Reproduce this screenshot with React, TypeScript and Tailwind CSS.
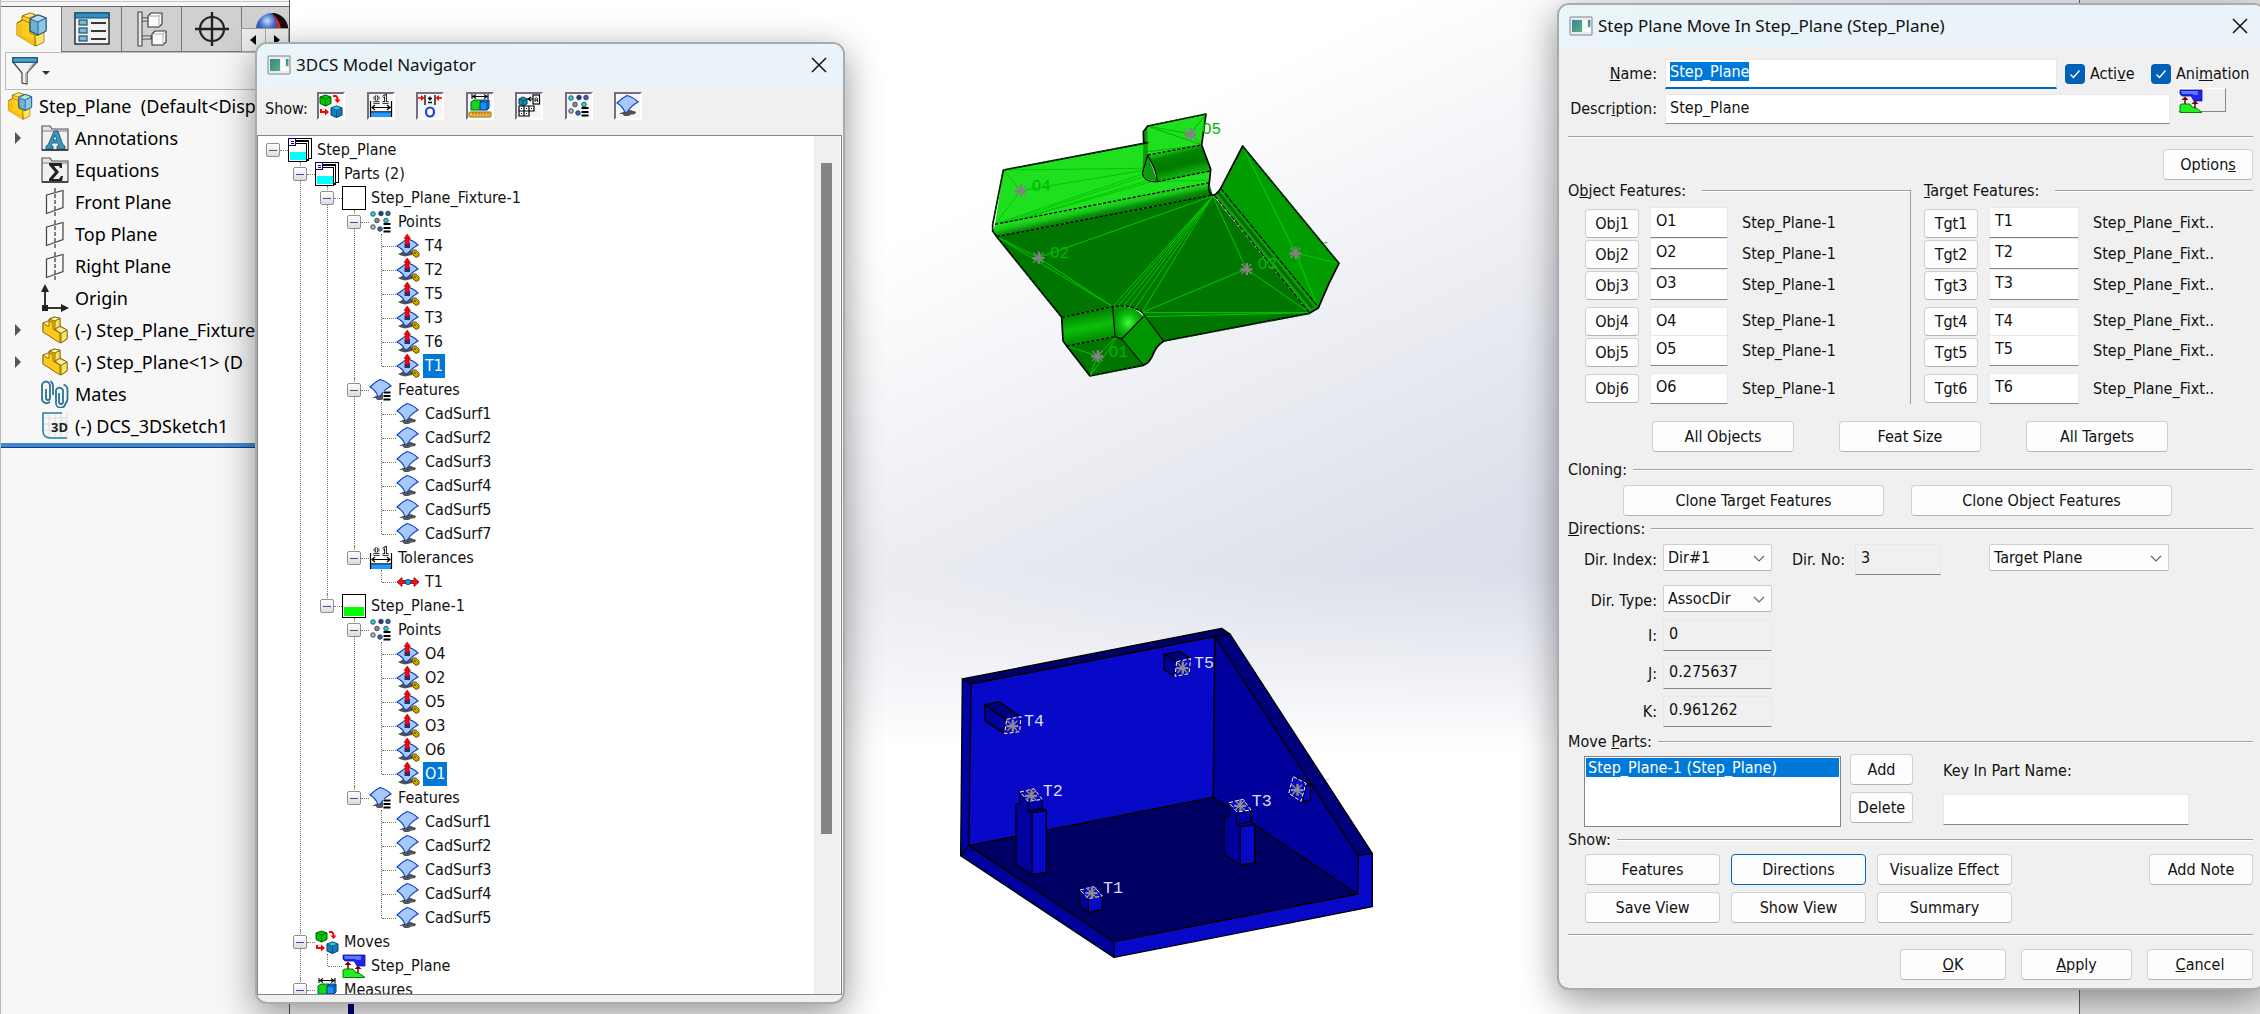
import { ReactNode, useEffect, useRef } from "react";

type IconProps = {
  className?: string;
};

type TreeNode = {
  label: string;
  icon: ReactNode;
  selected?: boolean;
  open?: boolean;
  children?: TreeNode[];
};

/* ---------- feature manager icons ---------- */

const PartIcon = ({ className }: IconProps) => (
  <svg viewBox="0 0 26 28" className={className} stroke="#7a5c0c" strokeWidth=".8" strokeLinejoin="round">
    <path d="M1 7v9l18 11 6-4v-9l-7-4V2l-6-1-5 2v3z" fill="#f9c815" />
    <path d="M1 7l6-2 4 1v7l7 4v10L1 16z" fill="#fbc91c" />
    <path d="M7 3l6-2 5 1.500-5 2.500z" fill="#fff0a0" />
    <path d="M1 7l6-2.500V10l-1 .5z" fill="#ffe97a" />
    <path d="M13 5l5-2.500v8L13 13z" fill="#ffe24d" />
    <path d="M13 13l5-2.500 7 3.500-6 3.500z" fill="#fff0a0" />
    <path d="M19 17.500l6-3.500v9l-6 4z" fill="#ffe45e" />
  </svg>
);

const AssemblyIcon = ({ className }: IconProps) => (
  <svg viewBox="0 0 31 35" className={className}>
    <path d="M1 11 6 8V4l8-3 6 2v18l7-2v11l-8 4L1 23z" fill="#ffcb1c" stroke="#8a6a10" />
    <path d="M1 11l5 2v10l12 6v5L1 23z" fill="#f5bf12" />
    <path d="M1 11l6-3 7 3v10l5 2v11" fill="none" stroke="#8a6a10" strokeWidth=".8" />
    <path d="M6 4l8-3 6 2-7 3z" fill="#ffe97a" stroke="#8a6a10" strokeWidth=".7" />
    <path d="M19 24l9-4v10l-8 4z" fill="#ffe45e" stroke="#8a6a10" strokeWidth=".7" />
    <path d="M14 7l8-4 8 3v13l-8 4-8-4z" fill="#6fb1d8" stroke="#15506f" strokeWidth="1.2" />
    <path d="M14 7l8-4 8 3-8 4z" fill="#b9dcf0" stroke="#15506f" strokeWidth=".8" />
    <path d="M22 10l8-4v13l-8 4z" fill="#8fc6e4" stroke="#15506f" strokeWidth=".8" />
  </svg>
);

const PropertyIcon = () => (
  <svg viewBox="0 0 36 34" className="h-[34px] w-9">
    <rect x="1" y="1" width="34" height="31" fill="#f4f4f4" stroke="#222" strokeWidth="1.4" />
    <rect x="1" y="1" width="34" height="5" fill="#2f8fbf" stroke="#14506e" />
    {[8, 16, 24].map((y) => (
      <g key={y}>
        <rect x="5" y={y} width="8" height="5" fill="#7fb9d8" stroke="#16536f" strokeWidth="1.2" />
        <path d={`M17 ${y + 3}h15`} stroke="#222" strokeWidth="1.8" />
      </g>
    ))}
  </svg>
);

const ConfigIcon = () => (
  <svg viewBox="0 0 30 36" className="h-9 w-[30px]">
    <path d="M3 1v34M5 9h8M5 27h10" stroke="#555" strokeWidth="1.2" />
    <path d="M1 1h4v34H1zM5 7h7v3H5zM5 25h9v3H5z" fill="#e8e8e8" stroke="#444" strokeWidth="1.1" />
    <path d="M11 5l3-3h11v11l-3 3H11z" fill="#fafafa" stroke="#333" strokeWidth="1.1" />
    <path d="M11 5h11v11M22 5l3-3" fill="none" stroke="#999" strokeWidth=".8" />
    <path d="M15 23l3-3h11v11l-3 3H15z" fill="#fafafa" stroke="#333" strokeWidth="1.1" />
    <path d="M15 23h11v11M26 23l3-3" fill="none" stroke="#999" strokeWidth=".8" />
  </svg>
);

const TargetIcon = () => (
  <svg viewBox="0 0 36 36" className="size-9">
    <circle cx="18" cy="18" r="12" fill="none" stroke="#222" strokeWidth="2.2" />
    <path d="M18 1v34M1 18h34" stroke="#222" strokeWidth="2.4" />
  </svg>
);

const SphereIcon = () => (
  <svg viewBox="0 0 34 34" className="size-[34px]">
    <defs>
      <radialGradient id="ball" cx=".35" cy=".25" r=".7">
        <stop offset="0" stopColor="#cfe0ff" />
        <stop offset=".35" stopColor="#3c69c8" />
        <stop offset="1" stopColor="#152a6b" />
      </radialGradient>
    </defs>
    <circle cx="17" cy="17" r="16" fill="url(#ball)" />
    <path d="M17 1a16 16 0 0 1 16 16H22Q22 8 17 1" fill="#1a0a0a" />
    <path d="M17 1q4 4 5 16l4 0Q25 8 17 1" fill="#d62b2b" />
  </svg>
);

const FilterIcon = () => (
  <svg viewBox="0 0 26 28" className="h-7 w-[26px]">
    <path d="M1 5 10 16v10l5 1V16L25 5z" fill="#f1f1f1" stroke="#444" strokeWidth="1.2" />
    <rect x=".7" y=".7" width="24.6" height="4.6" fill="#4aa3cb" stroke="#14506e" strokeWidth="1.2" />
    <path d="M14 16v9M16 14l6-8" stroke="#aaa" strokeWidth="1.6" />
  </svg>
);

const Folder = ({ children }: { children: ReactNode }) => (
  <svg viewBox="0 0 28 26" className="h-[26px] w-7">
    <path d="M1 1h8l2 3h16v21H1z" fill="#e4e4e4" stroke="#555" strokeWidth="1.2" />
    <path d="M1 6h26" stroke="#888" strokeWidth="1" />
    <rect x="2" y="7" width="24" height="17" fill="#f1f1f1" />
    {children}
    <path d="M1 25h26" stroke="#222" strokeWidth="1.4" />
  </svg>
);

const AnnotationsIcon = () => (
  <Folder>
    <path
      d="M5 24v-3l2-1 6-14h4l5 14 2 1v3h-8v-3h2l-1-3h-6l-1 3h2v3zM12 15h4l-2-5z"
      fill="#3a95c0"
      fillRule="evenodd"
      stroke="#12506e"
      strokeWidth=".8"
    />
  </Folder>
);

const EquationsIcon = () => (
  <Folder>
    <path d="M8 6h13v5h-2l-1-2h-5l5 6-6 7h6l2-3h2l-1 5H8v-2l6-7-6-7z" fill="#222" />
  </Folder>
);

const PlaneIcon = () => (
  <svg viewBox="0 0 20 28" className="h-7 w-5">
    <path d="M1.500 7 18 2.500v17L1.500 25.500z" fill="none" stroke="#444" strokeWidth="1.200" />
    <path d="M10 0v28" stroke="#333" strokeWidth="1.200" strokeDasharray="4 2" />
  </svg>
);

const OriginIcon = () => (
  <svg viewBox="0 0 28 28" className="size-7">
    <path d="M4 8v16h16" fill="none" stroke="#333" strokeWidth="2" />
    <path d="M4 0 8 8H0zM28 24l-8 4v-8zM1 21h6v6H1z" fill="#222" />
  </svg>
);

const MatesIcon = () => (
  <svg viewBox="0 0 28 28" className="size-7" fill="none" stroke="#2a7394" strokeWidth="1.800">
    <path d="M5 9v9a2 2 0 0 0 4 0V6a4 4.500 0 0 0-8 0v13a4.500 4.500 0 0 0 8 2.500M12 15V6q0-3-2.500-5" />
    <path d="M18 13v9a2 2 0 0 0 4 0V10a4 4.500 0 0 0-7 0v12a4.800 5 0 0 0 9.500 1.500q2-2 2-5V10q0-4-4-5.500" />
  </svg>
);

const SketchIcon = () => (
  <svg viewBox="0 0 28 28" className="size-7">
    <path d="M2 6h24M2 12h24M2 18h24M8 1v26M14 1v26M20 1v26M26 1v26" stroke="#ddd" strokeWidth="1" />
    <path d="M21 1H2v18q0 7 8 7h16" fill="none" stroke="#2a7fa6" strokeWidth="1.600" />
    <text x="10" y="20" fontSize="13" fontWeight="700" fill="#222" fontFamily="Noto Sans, sans-serif">
      3D
    </text>
  </svg>
);

/* ---------- navigator icons, 24 unit grid ---------- */

const Pages = () => (
  <svg viewBox="0 0 24 24" className="size-6" shapeRendering="crispEdges">
    <path d="M8 .7h15.300v20H21M5 3h15.500v19H19" fill="none" stroke="#000" strokeWidth="1.400" />
    <rect x=".7" y="5.500" width="18" height="17.800" fill="#fff" stroke="#000" strokeWidth="1.400" />
    <rect x="2" y="14" width="15.500" height="8" fill="#00ffff" />
    <rect x=".7" y=".7" width="7" height="6.600" fill="#fff" stroke="#000080" strokeWidth="1.400" />
    <path d="M2.500 3h3M2.500 5h3" stroke="#000080" />
  </svg>
);

const Box = ({ fill }: { fill?: string }) => (
  <svg viewBox="0 0 24 24" className="size-6" shapeRendering="crispEdges">
    <rect x=".5" y=".5" width="23" height="23" fill="#fff" stroke="#000" />
    {fill && <rect x="2" y="13" width="20" height="9" fill={fill} />}
  </svg>
);

const PointsIcon = () => (
  <svg viewBox="0 0 24 24" className="size-6">
    <g stroke="#234" strokeWidth=".8">
      <circle cx="4" cy="4" r="2.300" fill="#1fd6dc" />
      <circle cx="12" cy="3.500" r="2.300" fill="#23407e" />
      <circle cx="19" cy="3.500" r="2.300" fill="#3a62b8" />
      <circle cx="8" cy="10.500" r="2.300" fill="#8a8a8a" />
      <circle cx="17" cy="10.500" r="2.300" fill="#1fd6dc" />
      <circle cx="4" cy="17" r="2.300" fill="#b4b4b4" />
      <circle cx="11" cy="19" r="2.300" fill="#3a62b8" />
    </g>
    <path d="M14.500 14h7M14.500 18h7M14.500 21.500h7" stroke="#000" strokeWidth="2.200" />
  </svg>
);

const surface = (
  <>
    <path d="M3 20q5-3 8-3 4-2 6 0 3 0 3 2-2 2-5 1.500-2 2-5 1.500-3 0-3-2z" fill="#555" />
    <path
      d="M1 9Q6 4 11 1.500q6 1.500 11 6.500-6 3-10 9-1 1.500-3 1.500-2-6-8-9.500z"
      fill="#a8c8fb"
      stroke="#0a3fc0"
      strokeWidth="1.100"
    />
  </>
);

const SurfaceIcon = () => (
  <svg viewBox="0 0 24 24" className="size-6">
    {surface}
  </svg>
);

const SurfaceListIcon = () => (
  <svg viewBox="0 0 24 24" className="size-6">
    {surface}
    <path d="M14 13h8v10h-8z" fill="#fff" />
    <path d="M14.500 14.500h7M14.500 18h7M14.500 21.500h7" stroke="#000" strokeWidth="2.200" />
  </svg>
);

const PointIcon = () => (
  <svg viewBox="0 0 24 24" className="size-6">
    <path d="M2 20q5-3 9-3 5-1 7 2l-2 2-7 1.500-4-1z" fill="#555" />
    <path
      d="M1 12q5-3 10-7 6 1 11 6-6 3-10 8l-3 1q-2-5-8-8z"
      fill="#a8c8fb"
      stroke="#0a3fc0"
      strokeWidth="1.100"
    />
    <rect x="8.500" y="9" width="5.500" height="5" fill="#16357f" />
    <path d="M11.200 0 14.500 4.500h-1.500V11h-3.500V4.500H8z" fill="#f00" stroke="#a00" strokeWidth=".600" />
    <path d="M16 16h4l3 3v3l-3 1.500-3-2.500z" fill="#c8a400" stroke="#6b5800" strokeWidth="1" />
    <circle cx="19" cy="19" r="1" fill="#6b5800" />
  </svg>
);

const ToleranceIcon = () => (
  <svg viewBox="0 0 24 24" className="size-6">
    <path d="M2 18h20v5H2z" fill="#1f9bff" />
    <path d="M1.500 7v16M22.500 7v16" stroke="#000" strokeWidth="1.200" />
    <path d="M1 17.800h22" stroke="#000" strokeWidth="1" />
    <path d="M3 13.500h18M6 11l-3 2.500 3 2.500M18 11l3 2.500-3 2.500" fill="none" stroke="#000" strokeWidth="1.200" />
    <path d="M4.500 4h6M7.500 1.500v5M4.500 8.500h6M14 3l2.500-1.500V8.500M13.500 8.500h6" fill="none" stroke="#000" strokeWidth="2.600" />
    <path d="M4.500 4h6M7.500 1.500v5M4.500 8.500h6M14 3l2.500-1.500V8.500M13.500 8.500h6" fill="none" stroke="#fff" strokeWidth=".900" />
  </svg>
);

const GaugeIcon = () => (
  <svg viewBox="0 0 24 24" className="size-6">
    <path d="M7 1v10M17 1v10M10 4.500h4M12 2.500v4M10 8.500h4" stroke="#000" strokeWidth="1.300" />
    <path d="M0 4h5M24 4h-5" stroke="#f00" strokeWidth="1.500" />
    <path d="M3 1l3.500 3L3 7zM21 1l-3.500 3L21 7z" fill="#f00" />
    <ellipse cx="12" cy="18" rx="4" ry="4.500" fill="#fff" stroke="#1f3fe0" strokeWidth="2.200" />
  </svg>
);

const ArrowPairIcon = () => (
  <svg viewBox="0 0 24 24" className="size-6">
    <path d="M1 12l5-4.500v3h12v-3l5 4.500-5 4.500v-3H6v3z" fill="#f00f0f" stroke="#8a0000" strokeWidth=".800" />
    <circle cx="12" cy="12" r="2.700" fill="#12a0f0" stroke="#123a80" strokeWidth=".800" />
  </svg>
);

const MovesIcon = () => (
  <svg viewBox="0 0 24 24" className="size-6">
    <path d="M1 3l5.500-2L12 3v6.500L6.500 12 1 9.500z" fill="#00c800" stroke="#006000" />
    <path d="M1 3l5.500 2L12 3M6.500 5v7" fill="none" stroke="#006000" strokeWidth=".800" />
    <path d="M12 14l5.500-2 5.500 2v7l-5.500 2.500L12 21z" fill="#0f7fc4" stroke="#053a68" />
    <path d="M12 14l5.500-2 5.500 2-5.500 2z" fill="#26cfd2" stroke="#053a68" strokeWidth=".600" />
    <path d="M17.500 16v7" stroke="#053a68" strokeWidth=".800" />
    <path d="M14 2h3q1.500 1 1.500 4M2 15v3h4" fill="none" stroke="#f00" strokeWidth="2" />
    <path d="M15.500 5.500h6l-3 3.500zM6 14.500l4 3.500-4 3.500z" fill="#f00" />
  </svg>
);

const StepPlaneIcon = () => (
  <svg viewBox="0 0 24 24" className="size-6">
    <path d="M1 1h22v11h-8l-3-5H3L1 5z" fill="#2222f0" stroke="#1010a0" strokeWidth=".800" />
    <path d="M2 2h17v4h-4l-2-1H3z" fill="#5a78ff" />
    <path d="M1 16l2-1h8l2 3 4 1 6 4.500H1z" fill="#22ee22" stroke="#087a08" />
    <path d="M6 15v-5M16 19v-5" stroke="#7a0000" strokeWidth="1.500" />
    <path d="M2.500 11 6 7.500 9.500 11zM12.500 15l3.500-3.500 3.500 3.500z" fill="#7a0000" />
  </svg>
);

const MeasureIcon = () => (
  <svg viewBox="0 0 24 24" className="size-6">
    <path d="M4 0v5M20 0v5M5 2.500h14M8 .5l-3 2 3 2M16 .5l3 2-3 2" fill="none" stroke="#000" strokeWidth="1.100" />
    <path d="M3 8l3-2h8v8l-2 2H3z" fill="#14d814" stroke="#063" />
    <path d="M12 8l3-2h6v8l-2 2h-7z" fill="#1590ff" stroke="#002a66" />
    <path d="M19 8v8M12 8h7l2-2" fill="none" stroke="#002a66" strokeWidth=".800" />
    <rect x="1" y="18" width="22" height="5" rx="1" fill="#f2b84c" stroke="#a66a00" />
    <path d="M5 18v3M8 18v3M11 18v3M14 18v3M17 18v3M20 18v3" stroke="#a66a00" strokeWidth=".900" />
  </svg>
);

const DatumIcon = () => (
  <svg viewBox="0 0 24 24" className="size-6">
    <path d="M2 5l4-2 4 2v5l-4 2-4-2z" fill="#1590b4" stroke="#053a4c" />
    <path d="M2 5l4 2 4-2M6 7v5" fill="none" stroke="#053a4c" strokeWidth=".800" />
    <path d="M10 5h6M14 3l-3 2 3 2" fill="none" stroke="#000" strokeWidth="1.200" />
    <rect x="16" y="1" width="6.500" height="9" fill="#fff" stroke="#000" strokeWidth="1.200" />
    <path d="M18 8V4.500l1.200-1 1.200 1V8M18 6h2.400" fill="none" stroke="#000" strokeWidth=".900" />
    <path d="M2 12h15v5H2zM2 17h10v5H2zM7 12v10M12 12v5" fill="#fff" stroke="#000" strokeWidth="1.200" />
    <path d="M4 14.500h1M9 14.500h1M14 14.500h1M4 19.500h1M9 19.500h1" stroke="#000" strokeWidth="1.200" />
  </svg>
);

const WindowIcon = () => (
  <svg viewBox="0 0 24 20" className="h-5 w-6 shrink-0">
    <defs>
      <linearGradient id="win" x1="0" x2="1" y1="0" y2="1">
        <stop offset="0" stopColor="#3d7f9c" />
        <stop offset="1" stopColor="#55b47a" />
      </linearGradient>
    </defs>
    <rect x="1" y="1" width="22" height="18" rx="1" fill="#e9edf0" stroke="#a4a8ae" strokeWidth="1.500" />
    <rect x="3" y="4" width="10" height="12" fill="url(#win)" />
    <rect x="14" y="4" width="3.500" height="7" fill="#fff" />
    <rect x="19" y="4" width="2.500" height="7" fill="url(#win)" />
    <rect x="14" y="12" width="7.500" height="4" fill="#fff" />
  </svg>
);

const CloseIcon = () => (
  <svg viewBox="0 0 16 16" className="size-4">
    <path d="M1 1l14 14M15 1L1 15" stroke="#111" strokeWidth="1.500" />
  </svg>
);

/* ---------- left panel ---------- */

const managerTabs = [
  { name: "FeatureManager", icon: <AssemblyIcon className="h-[35px] w-[31px]" /> },
  { name: "PropertyManager", icon: <PropertyIcon /> },
  { name: "ConfigurationManager", icon: <ConfigIcon /> },
  { name: "DimXpertManager", icon: <TargetIcon /> },
  { name: "DisplayManager", icon: <SphereIcon /> },
];

const part = <PartIcon className="h-7 w-[26px]" />;

const features = [
  { label: "Annotations", icon: <AnnotationsIcon />, arrow: true },
  { label: "Equations", icon: <EquationsIcon /> },
  { label: "Front Plane", icon: <PlaneIcon /> },
  { label: "Top Plane", icon: <PlaneIcon /> },
  { label: "Right Plane", icon: <PlaneIcon /> },
  { label: "Origin", icon: <OriginIcon /> },
  { label: "(-) Step_Plane_Fixture", icon: part, arrow: true },
  { label: "(-) Step_Plane<1> (D", icon: part, arrow: true },
  { label: "Mates", icon: <MatesIcon /> },
  { label: "(-) DCS_3DSketch1", icon: <SketchIcon /> },
];

const FeatureManager = () => (
  <aside className="w-[290px] shrink-0 overflow-hidden border-r border-l border-r-[#555] border-l-[#bbb] bg-[#f7f7f7] font-['Noto_Sans',sans-serif] text-lg text-black">
    <div className="mt-px h-[5px] border-t border-[#c4c4c4]" />
    <div className="relative flex h-[46px] border-t border-[#666]">
      {managerTabs.map((tab, index) => (
        <button
          key={tab.name}
          aria-label={tab.name}
          className={
            index === 0
              ? "flex w-[60px] shrink-0 items-center justify-center"
              : "flex w-[60px] shrink-0 items-center justify-center border-b border-l border-[#777] bg-[#d0d0d0]"
          }
        >
          {tab.icon}
        </button>
      ))}
      <div className="absolute right-0 bottom-0 flex h-[24px] w-12 border border-[#999] bg-[#ececec]">
        <button aria-label="Previous tab" className="flex flex-1 items-center justify-center border-r border-[#aaa]">
          <svg viewBox="0 0 6 10" className="h-2.5 w-1.5">
            <path d="M6 0v10L0 5z" />
          </svg>
        </button>
        <button aria-label="Next tab" className="flex flex-1 items-center justify-center">
          <svg viewBox="0 0 6 10" className="h-2.5 w-1.5">
            <path d="M0 0v10l6-5z" />
          </svg>
        </button>
      </div>
    </div>
    <button aria-label="Filter" className="ml-1 flex h-[38px] w-full items-center gap-1 border border-[#bbb] pl-1.5">
      <FilterIcon />
      <svg viewBox="0 0 8 4" className="mt-1 h-1 w-2">
        <path d="M0 0h8L4 4z" fill="#333" />
      </svg>
    </button>
    <ul className="border-b-4 border-[#3a8cc8] pb-px whitespace-pre">
      <li className="flex h-8 items-center gap-1.5 pl-1.5">
        <AssemblyIcon className="h-7 w-[26px]" />
        Step_Plane  (Default&lt;Disp
      </li>
      {features.map((item) => (
        <li key={item.label} className="flex h-8 items-center">
          <span className="flex w-[38px] pl-3.5">
            {item.arrow && (
              <svg viewBox="0 0 6 12" className="h-3 w-1.5">
                <path d="M0 0v12l6-6z" fill="#555" />
              </svg>
            )}
          </span>
          <span className="mr-1 flex w-8 justify-center">{item.icon}</span>
          {item.label}
        </li>
      ))}
    </ul>
    <div className="h-px bg-[#1c2f9c]" />
  </aside>
);

/* ---------- graphics area ---------- */

const Star = ({ x, y, color }: { x: number; y: number; color: string }) => (
  <path
    transform={`translate(${x} ${y})`}
    d="M-18 0h36M0-18v36M-15-15l30 30M15-15l-30 30M-18 3h36M3-18v36"
    stroke={color}
    strokeWidth="4"
  />
);

const starPoints = [
  [152, 302],
  [205, 503],
  [829, 537],
  [976, 489],
  [382, 798],
  [661, 132],
];

const StepPlanePart = () => (
  <svg viewBox="0 0 1200 930" className="h-[310px] w-[400px]" strokeLinejoin="round">
    <defs>
      <linearGradient id="fold" gradientUnits="userSpaceOnUse" x1="390" y1="342" x2="398" y2="380">
        <stop offset="0" stopColor="#1fdd1f" />
        <stop offset=".35" stopColor="#17c817" />
        <stop offset=".7" stopColor="#0a8c0a" />
        <stop offset="1" stopColor="#007a00" />
      </linearGradient>
      <linearGradient id="bend" gradientUnits="userSpaceOnUse" x1="610" y1="180" x2="630" y2="262">
        <stop offset="0" stopColor="#18c418" />
        <stop offset=".2" stopColor="#008400" />
        <stop offset=".6" stopColor="#007c00" />
        <stop offset="1" stopColor="#12b812" />
      </linearGradient>
      <linearGradient id="lip" gradientUnits="userSpaceOnUse" x1="345" y1="668" x2="360" y2="754">
        <stop offset="0" stopColor="#008000" />
        <stop offset=".5" stopColor="#0ac00a" />
        <stop offset="1" stopColor="#008a00" />
      </linearGradient>
      <radialGradient id="corner">
        <stop offset="0" stopColor="#3aff3a" />
        <stop offset=".5" stopColor="#0fc00f" />
        <stop offset="1" stopColor="#009000" />
      </radialGradient>
    </defs>
    <path d="M100 240 533 158l-14 80 10 30 32 7 158-32v35L75 403z" fill="#1fe01f" />
    <path d="M75 403 718 278l10 37L80 440l-10-18z" fill="url(#fold)" />
    <path d="M80 440 728 315l290 355-436 85-62-87-50-19-42 1-153 32z" fill="#007600" />
    <path d="M533 108 708 72l-13 93-162 30z" fill="#1fe01f" />
    <path d="M533 108 522 125l-5 120q6 30 45 28l-28-78z" fill="#0b9a0b" />
    <path d="M533 195l162-30q8 30 27 65v13l-160 32q-2-30-29-80z" fill="url(#bend)" />
    <path d="M818 168 1107 520l-30 60-32 74-25 16L752 295z" fill="#009c00" />
    <path d="M752 295 732 315l286 355 20-18z" fill="#0aa00a" />
    <path d="M742 304l286 350" stroke="#006a00" strokeWidth="9" />
    <path d="M275 682l153-32 7 90-145 28-10-15z" fill="url(#lip)" />
    <path d="M428 650q60-8 94 30l-67 67-20-7z" fill="url(#corner)" />
    <path d="M516 664l66 91q-22 13-32 38-10 27-30 33l-65-79 65-67z" fill="#009400" />
    <path d="M290 768l145-28 20 7 65 78-160 33z" fill="#007600" />

    <g fill="none" stroke="#00c800" strokeWidth="3">
      <path d="M100 240l52 62 375-62M100 240l427-5M152 302 75 403M80 400l445-150M90 400l438-142M100 400l440-130M110 398l440-124M560 275l160-5" />
      <path d="M533 108l128 24 47-60M533 108l162 57-34-33M533 185l162-20" stroke="#00b400" />
      <path d="M80 440l125 63L728 318M80 440l348 210-223-147" />
      <path d="M728 318 430 648M728 318 445 646M728 318 462 646M728 318 478 648M728 318 495 655M728 318 515 668" />
      <path d="M728 318l101 219 189 131M829 537 515 668l503 0M525 680l493-12" />
      <path d="M818 168l158 321 62 151M818 168l164 330 56 142M976 489l131 31" />
      <path d="M290 768l92 30 55-56M360 858l22-60M360 858l80-114" />
    </g>

    <g fill="none" stroke="#000" strokeWidth="3.500">
      <path d="M533 195l-16 55q6 28 45 25M533 195q28 50 29 80M428 650l7 90M435 740l20 7 65-67M455 747l65 78M516 666l66 89" />
      <path d="M752 295l288 350M732 315l286 353" strokeDasharray="16 4" />
    </g>
    <g fill="none" stroke="#000" strokeWidth="4" strokeDasharray="10 5">
      <path d="M75 403 718 278M80 440 728 315M533 195l162-30M562 275l158-32M275 682l153-32q60-8 92 20M290 768l145-28" />
    </g>
    <path
      d="M533 158 100 240 68 403v20l12 17 195 242 4 70 11 16 70 90 160-32q20-8 30-35 10-25 32-38l436-83 27-16 32-74 30-60L818 168l-66 127q-14 24-28 20-12-16-6-37l4-40-27-73 13-93-175 36-13 17 1 33z"
      fill="none"
      stroke="#000"
      strokeWidth="5"
    />
    <g fill="none" stroke="#00c800" strokeWidth="1.500" strokeDasharray="6 8">
      <path d="M533 158 100 240 68 403v20l12 17 195 242M1107 520 818 168M1018 670l-436 85M708 72 533 108M360 858l160-32" />
    </g>
    <path d="M1062 458h10" stroke="#00c800" strokeWidth="3" />

    {starPoints.map(([x, y]) => (
      <Star key={x} x={x} y={y} color="#848084" />
    ))}
    <g fill="#00b800" fontSize="48" className="font-['Liberation_Mono',monospace]">
      <text x="185" y="304">
        O4
      </text>
      <text x="240" y="505">
        O2
      </text>
      <text x="863" y="538">
        O3
      </text>
      <text x="416" y="800">
        O1
      </text>
      <text x="696" y="132">
        O5
      </text>
    </g>
  </svg>
);

const targetPoints = [
  { name: "T5", x: 727, y: 173 },
  { name: "T4", x: 217, y: 347 },
  { name: "T2", x: 273, y: 556 },
  { name: "T3", x: 900, y: 586 },
  { name: "T1", x: 454, y: 848 },
  { name: "", x: 1071, y: 539 },
];

const FixturePart = () => (
  <svg viewBox="0 0 1380 1110" className="h-[370px] w-[460px]" strokeLinejoin="round">
    <g stroke="#000" strokeWidth="4">
      <path d="M67 207 845 55l25 17-45 8L93 222z" fill="#000066" />
      <path d="M67 207l26 15-6 485-25 30z" fill="#0000a8" />
      <path d="M93 222 825 80l-5 482L87 707z" fill="#0808c8" />
      <path d="M87 707 820 562l433 290-731 143z" fill="#000064" />
      <path d="M825 80l430 657-2 115-433-290z" fill="#00009c" />
      <path d="M825 80l45-8 427 658-42 7z" fill="#00007c" />
      <path d="M62 737l25-30 435 288v47z" fill="#00009c" />
      <path d="M522 995l731-143 2-115 42-7v160L522 1042z" fill="#0808c8" />

      <path d="M673 133l46-9 33 22-5 45-42 8-32-20z" fill="#00007c" />
      <path d="M673 133l37 22-5 44-32-20z" fill="#00009c" />
      <path d="M134 284l44-8 65 44-4 45-45 6-60-40z" fill="#00007c" />
      <path d="M134 284l64 45-4 42-60-40z" fill="#00009c" />

      <path d="M228 583l12-3v-34l42-10 25 32v30l12 5v184l-43 7-48-30z" fill="#00009c" />
      <path d="M276 608l43-7v186l-43 7z" fill="#0808c8" />
      <path d="M265 572l42-6v30l-42 7zM265 603l42-7 12 5-43 7z" fill="#0000a8" />
      <path d="M853 621l14-3v-36l40-12 26 30v36l11 6v116l-42 7-49-32z" fill="#00009c" />
      <path d="M901 650l43-7v115l-43 7z" fill="#0808c8" />
      <path d="M890 608l43-6v33l-43 8zM890 643l43-8 11 8-43 7z" fill="#0000a8" />

      <path d="M420 840l42-8 25 26v40l-42 9-25-17z" fill="#00009c" />
      <path d="M445 865l42-7v40l-42 9z" fill="#0808c8" />
      <path d="M1068 499l43 24v47l-28 4-37-24z" fill="#00009c" />
      <path d="M1097 532l14-8v46l-24 4z" fill="#0808c8" />
    </g>
    <g fill="#0808c8" stroke="#fff" strokeWidth="3" strokeDasharray="12 6">
      <path d="M710 155l42-9-5 45-42 8z" />
      <path d="M200 328l43-8-4 45-45 6z" />
      <path d="M240 546l42-10 25 32-42 6z" />
      <path d="M867 578l42-10 24 32-42 6z" />
      <path d="M420 840l42-10 25 28-42 8z" />
      <path d="M1060 500l38 20-15 54-37-24z" />
    </g>
    {targetPoints.map((p) => (
      <Star key={p.x} x={p.x} y={p.y} color="#8c8c8c" />
    ))}
    <g fill="#dcdcf0" fontSize="50" className="font-['Liberation_Mono',monospace]">
      {targetPoints.map((p) => (
        <text key={p.x} x={p.x + 35} y={p.y + 2}>
          {p.name}
        </text>
      ))}
    </g>
    <path d="M1157 508h10" stroke="#bbb" strokeWidth="3" />
  </svg>
);

const GraphicsArea = () => (
  <main className="relative flex-1 overflow-hidden bg-[linear-gradient(to_bottom,transparent_56%,#fff_74%),linear-gradient(155deg,#fff_28%,#dde0ea_58%,#d4d8e6_75%)]">
    <div className="absolute top-[90px] left-[680px]">
      <StepPlanePart />
    </div>
    <div className="absolute top-[610px] left-[650px]">
      <FixturePart />
    </div>
    <div className="absolute bottom-0 left-[58px] h-4 w-1.5 bg-[#00007c]" />
  </main>
);

/* ---------- model navigator ---------- */

const navigatorFilters = [
  { name: "Moves", icon: <MovesIcon /> },
  { name: "Tolerances", icon: <ToleranceIcon /> },
  { name: "GD&T", icon: <GaugeIcon /> },
  { name: "Measures", icon: <MeasureIcon /> },
  { name: "Datums", icon: <DatumIcon /> },
  { name: "Points", icon: <PointsIcon /> },
  { name: "Features", icon: <SurfaceIcon /> },
];

const points = (names: string[], selected: string): TreeNode => ({
  label: "Points",
  icon: <PointsIcon />,
  children: names.map((label) => ({
    label,
    icon: <PointIcon />,
    selected: label === selected,
  })),
});

const surfaces = (ids: number[]): TreeNode => ({
  label: "Features",
  icon: <SurfaceListIcon />,
  children: ids.map((id) => ({ label: `CadSurf${id}`, icon: <SurfaceIcon /> })),
});

const modelTree: TreeNode = {
  label: "Step_Plane",
  icon: <Pages />,
  children: [
    {
      label: "Parts (2)",
      icon: <Pages />,
      children: [
        {
          label: "Step_Plane_Fixture-1",
          icon: <Box />,
          children: [
            points(["T4", "T2", "T5", "T3", "T6", "T1"], "T1"),
            surfaces([1, 2, 3, 4, 5, 7]),
            {
              label: "Tolerances",
              icon: <ToleranceIcon />,
              children: [{ label: "T1", icon: <ArrowPairIcon /> }],
            },
          ],
        },
        {
          label: "Step_Plane-1",
          icon: <Box fill="#00ff00" />,
          children: [points(["O4", "O2", "O5", "O3", "O6", "O1"], "O1"), surfaces([1, 2, 3, 4, 5])],
        },
      ],
    },
    {
      label: "Moves",
      icon: <MovesIcon />,
      children: [{ label: "Step_Plane", icon: <StepPlaneIcon /> }],
    },
    { label: "Measures", icon: <MeasureIcon />, open: true },
  ],
};

const TreeItem = ({ node, root, last }: { node: TreeNode; root?: boolean; last?: boolean }) => {
  const expandable = node.children || node.open;

  return (
    <li className="relative">
      {!root && (
        <span
          className={
            last
              ? "absolute top-0 left-[7px] h-3 border-l border-dotted border-[#777]"
              : "absolute top-0 bottom-0 left-[7px] border-l border-dotted border-[#777]"
          }
        />
      )}
      <div className="flex h-6 items-center">
        {expandable ? (
          <button
            aria-label={`Collapse ${node.label}`}
            className="relative flex size-[14px] items-center justify-center rounded-xs border border-[#8f8f8f] bg-linear-to-b from-white to-[#dcdcdc]"
          >
            <span className="h-px w-2 bg-[#33549c]" />
          </button>
        ) : (
          <span className="w-2" />
        )}
        <span
          className={
            expandable
              ? "w-2 border-t border-dotted border-[#777]"
              : "w-[14px] border-t border-dotted border-[#777]"
          }
        />
        {node.icon}
        <span
          className={
            node.selected ? "ml-[3px] bg-[#0078d7] px-0.5 leading-6 text-white" : "ml-[3px] px-0.5 leading-6"
          }
        >
          {node.label}
        </span>
      </div>
      {node.children && (
        <ul className="ml-[27px]">
          {node.children.map((child, index) => (
            <TreeItem key={child.label} node={child} last={index === node.children!.length - 1} />
          ))}
        </ul>
      )}
    </li>
  );
};

const TitleBar = ({ title }: { title: string }) => (
  <header className="flex h-[43px] shrink-0 items-center rounded-t-[10px] bg-linear-to-r from-[#e9f5f9] to-[#eaf2fa] pr-4 pb-0.5 pl-2.5 font-['Noto_Sans',sans-serif] text-[17px] text-[#111]">
    <WindowIcon />
    <h2 className="ml-[5px] flex-1">{title}</h2>
    <button aria-label="Close">
      <CloseIcon />
    </button>
  </header>
);

const ModelNavigator = () => (
  <section className="absolute top-[42px] bottom-[10px] left-[255px] flex w-[590px] flex-col rounded-xl border-2 border-[#a9acae] bg-[#f0f0f0] pb-[7px] shadow-[0_10px_36px_rgba(0,0,0,0.42)]">
    <TitleBar title="3DCS Model Navigator" />
    <div className="flex h-12 shrink-0 items-start pt-[5px] pl-2">
      <span className="w-[52px] leading-[34px]">Show:</span>
      <div className="flex w-[325px] justify-between">
        {navigatorFilters.map((filter) => (
          <button
            key={filter.name}
            aria-label={filter.name}
            className="flex size-7 items-center justify-center border-2 border-t-[#6f6f86] border-r-white border-b-white border-l-[#6f6f86] bg-[#f6f6f6]"
          >
            {filter.icon}
          </button>
        ))}
      </div>
    </div>
    <div className="mr-px flex min-h-0 flex-1 border border-[#82858c] bg-white">
      <ul className="min-w-0 flex-1 overflow-hidden pt-0.5 pl-2">
        <TreeItem node={modelTree} root />
      </ul>
      <div className="mr-px w-[26px] bg-[#f0f0f0] pt-[27px] pl-[7px]">
        <div className="h-[671px] w-[11px] bg-[#858585]" />
      </div>
    </div>
  </section>
);

/* ---------- move dialog ---------- */

const buttonClass = "h-[31px] rounded-[4px] border border-[#d0d0d0] border-b-[#b4b4b4] bg-[#fdfdfd] text-center";
const inputClass =
  "h-[31px] border border-[#e8e8e8] border-b-[#868686] bg-white pr-1 pb-1 pl-[5px] outline-none read-only:bg-[#f0f0f0]";
const selectClass =
  "h-[27px] w-full appearance-none rounded-xs border border-[#cfcfcf] border-b-[#b4b4b4] bg-[#fdfdfd] pl-1 outline-none";

const Rule = () => <div className="h-0.5 flex-1 border-t border-b border-t-[#a0a0a0] border-b-white" />;

const SectionTitle = ({ children }: { children: ReactNode }) => (
  <div className="flex h-5 items-center gap-1.5 leading-5">
    <h3>{children}</h3>
    <Rule />
  </div>
);

const Dropdown = ({ id, value, className }: { id: string; value: string; className: string }) => (
  <div className={`relative ${className}`}>
    <select id={id} aria-label={value} className={selectClass}>
      <option>{value}</option>
    </select>
    <svg viewBox="0 0 12 7" className="pointer-events-none absolute top-[11px] right-[7px] h-[7px] w-3">
      <path d="M1 1l5 5 5-5" fill="none" stroke="#666" strokeWidth="1.200" />
    </svg>
  </div>
);

const rowGroups = [
  { rows: [1, 2, 3], className: "grid grid-rows-[31px_31px_31px]" },
  { rows: [4, 5], className: "grid grid-rows-[28px_31px]" },
  { rows: [6], className: "grid grid-rows-[31px]" },
];

type FeatureRowsProps = {
  button: string;
  prefix: string;
  owner: string;
  inputWidth: string;
};

const FeatureRows = ({ button, prefix, owner, inputWidth }: FeatureRowsProps) => (
  <div className="flex gap-[11px]">
    <div className="flex flex-col gap-[7px] pt-0.5">
      {rowGroups.map((group) => (
        <div key={group.rows[0]} className="flex flex-col gap-0.5">
          {group.rows.map((row) => (
            <button
              key={row}
              className="h-[29px] w-[54px] rounded-[4px] border border-[#d0d0d0] border-b-[#b4b4b4] bg-[#fdfdfd]"
            >
              {button}
              {row}
            </button>
          ))}
        </div>
      ))}
    </div>
    <div className="flex flex-col gap-[7px]">
      {rowGroups.map((group) => (
        <div key={group.rows[0]} className={group.className}>
          {group.rows.map((row) => (
            <label key={row} className="flex items-center gap-3.5">
              <input className={`${inputClass} ${inputWidth} self-start`} defaultValue={`${prefix}${row}`} />
              {owner}
            </label>
          ))}
        </div>
      ))}
    </div>
  </div>
);

const Check = ({ id, children }: { id: string; children: ReactNode }) => (
  <label htmlFor={id} className="flex items-center gap-[5px]">
    <span className="relative flex size-5">
      <input id={id} type="checkbox" defaultChecked className="size-5 appearance-none rounded-[4px] bg-[#005fb8]" />
      <svg viewBox="0 0 20 20" className="pointer-events-none absolute inset-0 size-5">
        <path d="M5.500 10.500l3 3 6-7" fill="none" stroke="#fff" strokeWidth="1.300" />
      </svg>
    </span>
    <span>{children}</span>
  </label>
);

const vector = [
  { axis: "I", value: "0" },
  { axis: "J", value: "0.275637" },
  { axis: "K", value: "0.961262" },
];

const MoveDialog = () => {
  const nameRef = useRef<HTMLInputElement>(null);

  useEffect(() => {
    nameRef.current?.focus();
    nameRef.current?.select();
  }, []);

  return (
    <section className="absolute top-[3px] -right-1.5 w-[709px] rounded-xl border-2 border-[#a9acae] bg-[#f0f0f0] pb-2 shadow-[0_10px_36px_rgba(0,0,0,0.42)]">
      <TitleBar title="Step Plane Move In Step_Plane (Step_Plane)" />
      <div className="pt-[11px] pr-[11px] pl-[9px]">
        <div className="flex items-center">
          <label htmlFor="name" className="mr-2 w-[89px] text-right">
            <u>N</u>ame:
          </label>
          <input
            id="name"
            ref={nameRef}
            defaultValue="Step_Plane"
            className="mr-2 h-[30px] w-[392px] border border-b-2 border-[#e8e8e8] border-b-[#0067c0] bg-white px-1 pb-1 outline-none selection:bg-[#0078d7] selection:text-white"
          />
          <div className="w-[86px]">
            <Check id="active">
              Acti<u>v</u>e
            </Check>
          </div>
          <Check id="animation">
            Ani<u>m</u>ation
          </Check>
        </div>
        <div className="mt-[5px] flex items-center">
          <label htmlFor="description" className="mr-2 w-[89px] text-right">
            Descr<u>i</u>ption:
          </label>
          <input
            id="description"
            defaultValue="Step_Plane"
            className="mr-2 h-[30px] w-[505px] border border-[#e8e8e8] border-b-[#868686] bg-white px-1 pb-1 outline-none"
          />
          <button
            aria-label="Move type"
            className="-mt-1.5 h-6 w-12 self-start border border-t-white border-r-[#868686] border-b-[#868686] border-l-white"
          >
            <StepPlaneIcon />
          </button>
        </div>

        <div className="mt-3 flex">
          <Rule />
        </div>
        <div className="mt-[11px] flex justify-end">
          <button className={`${buttonClass} w-[90px]`}>
            Option<u>s</u>
          </button>
        </div>

        <div className="mt-px flex">
          <div className="relative w-[343px] pb-0.5">
            <div className="flex h-5 items-center gap-4 leading-5">
              <h3>
                O<u>b</u>ject Features:
              </h3>
              <Rule />
            </div>
            <div className="absolute top-[9px] right-0 bottom-0.5 border-l border-[#a0a0a0]" />
            <div className="mt-1.5 pl-[17px]">
              <FeatureRows button="Obj" prefix="O" owner="Step_Plane-1" inputWidth="w-[78px]" />
            </div>
          </div>
          <div className="ml-[13px] flex-1">
            <div className="flex h-5 items-center gap-4 leading-5">
              <h3>
                <u>T</u>arget Features:
              </h3>
              <Rule />
            </div>
            <div className="mt-1.5">
              <FeatureRows button="Tgt" prefix="T" owner="Step_Plane_Fixt.." inputWidth="w-[90px]" />
            </div>
          </div>
        </div>

        <div className="mt-[15px] flex gap-[45px] pl-[84px]">
          <button className={`${buttonClass} w-[142px]`}>All Objects</button>
          <button className={`${buttonClass} w-[142px]`}>Feat Size</button>
          <button className={`${buttonClass} w-[142px]`}>All Targets</button>
        </div>

        <div className="mt-2">
          <SectionTitle>Cloning:</SectionTitle>
        </div>
        <div className="mt-[5px] flex gap-[27px] pl-[55px]">
          <button className={`${buttonClass} w-[261px]`}>Clone Target Features</button>
          <button className={`${buttonClass} w-[261px]`}>Clone Object Features</button>
        </div>

        <div className="mt-[3px]">
          <SectionTitle>
            <u>D</u>irections:
          </SectionTitle>
        </div>
        <div className="mt-[5px] flex">
          <label htmlFor="dir-index" className="mr-1.5 w-[89px] text-right leading-[31px]">
            Dir. Index:
          </label>
          <Dropdown id="dir-index" value="Dir#1" className="w-[109px]" />
          <label htmlFor="dir-no" className="mr-1.5 ml-5 w-[57px] leading-[31px]">
            Dir. No:
          </label>
          <input id="dir-no" readOnly value="3" className={`${inputClass} w-[86px]`} />
          <Dropdown id="dir-mode" value="Target Plane" className="ml-12 w-[180px]" />
        </div>
        <div className="mt-2.5 flex">
          <label htmlFor="dir-type" className="mr-1.5 w-[89px] text-right leading-[31px]">
            Dir. Type:
          </label>
          <Dropdown id="dir-type" value="AssocDir" className="w-[109px]" />
        </div>
        <div className="mt-1 flex flex-col gap-[7px]">
          {vector.map(({ axis, value }) => (
            <div key={axis} className="flex">
              <label htmlFor={`axis-${axis}`} className="mr-1.5 w-[89px] text-right leading-[31px]">
                {axis}:
              </label>
              <input id={`axis-${axis}`} readOnly value={value} className={`${inputClass} w-[109px]`} />
            </div>
          ))}
        </div>

        <div className="mt-[5px]">
          <SectionTitle>
            Move <u>P</u>arts:
          </SectionTitle>
        </div>
        <div className="mt-0.5 flex pl-4">
          <ul role="listbox" aria-label="Move Parts" className="mt-0.5 h-[71px] w-[257px] border border-[#82858c] bg-white p-px">
            <li role="option" aria-selected className="h-[19px] bg-[#0078d7] pl-0.5 leading-[19px] text-white">
              Step_Plane-1 (Step_Plane)
            </li>
          </ul>
          <div className="ml-[9px] flex flex-col gap-[7px]">
            <button className={`${buttonClass} w-[63px]`}>Add</button>
            <button className={`${buttonClass} w-[63px]`}>Delete</button>
          </div>
          <div className="ml-[30px] flex flex-col">
            <label htmlFor="part-name" className="h-10 leading-[34px]">
              Key In Part Name:
            </label>
            <input id="part-name" className={`${inputClass} w-[246px]`} />
          </div>
        </div>

        <div className="mt-[3px]">
          <SectionTitle>Show:</SectionTitle>
        </div>
        <div className="mt-1 flex items-start justify-between pl-[17px]">
          <div className="grid grid-cols-[135px_135px_135px] gap-x-[11px] gap-y-[7px]">
            <button className={buttonClass}>Features</button>
            <button className="h-[31px] rounded-[4px] border border-[#0067c0] bg-[#fdfdfd]">Directions</button>
            <button className={buttonClass}>Visualize Effect</button>
            <button className={buttonClass}>Save View</button>
            <button className={buttonClass}>Show View</button>
            <button className={buttonClass}>Summary</button>
          </div>
          <button className={`${buttonClass} w-[104px]`}>Add Note</button>
        </div>

        <div className="mt-[11px] flex">
          <Rule />
        </div>
        <div className="mt-[13px] flex justify-end gap-[15px]">
          <button className={`${buttonClass} w-[106px]`}>
            <u>O</u>K
          </button>
          <button className={`${buttonClass} w-[111px]`}>
            <u>A</u>pply
          </button>
          <button className={`${buttonClass} w-[106px]`}>
            <u>C</u>ancel
          </button>
        </div>
      </div>
    </section>
  );
};

export default function App() {
  return (
    <div className="relative flex h-screen overflow-hidden bg-white font-['DejaVu_Sans_Condensed','Noto_Sans',sans-serif] text-base text-[#111]">
      <FeatureManager />
      <GraphicsArea />
      <aside className="w-[181px] shrink-0 border-l border-[#666] bg-[#e6e6e6]" />
      <ModelNavigator />
      <MoveDialog />
    </div>
  );
}
